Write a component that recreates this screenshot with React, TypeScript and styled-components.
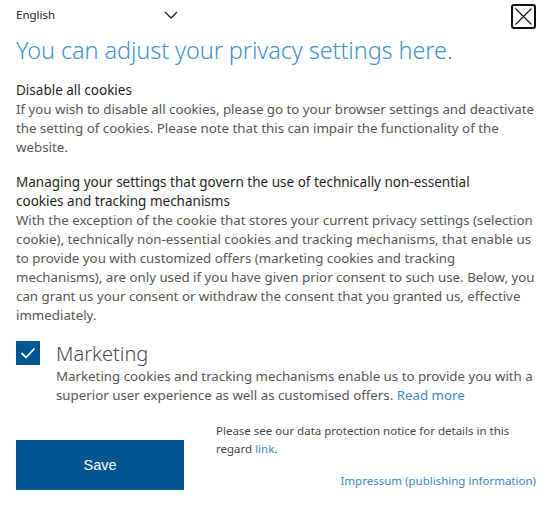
import React from "react";
import styled, { createGlobalStyle } from "styled-components";

const Global = createGlobalStyle`
  html, body { margin: 0; padding: 0; background: #fff; }
  body { font-family: "Noto Sans", "Open Sans", sans-serif; }
  * { box-sizing: border-box; }
`;

const Page = styled.div`
  width: 548px;
  padding: 4px 12px 0 16px;
  display: flex;
  flex-direction: column;
`;

const TopBar = styled.div`
  display: flex;
  align-items: flex-start;
  justify-content: space-between;
  height: 29px;
`;

const LangSelect = styled.div`
  width: 162px;
  display: flex;
  align-items: center;
  justify-content: space-between;
  padding-top: 3px;
  font-size: 11.5px;
  color: #222;
`;

const CloseButton = styled.button`
  width: 25px;
  height: 25px;
  border: 2px solid #111;
  border-radius: 3px;
  background: #fff;
  padding: 0;
  display: flex;
  align-items: center;
  justify-content: center;
  cursor: pointer;
`;

const Title = styled.h1`
  margin: 2px 0 0;
  font-size: 23.5px;
  font-weight: 300;
  color: #3d93cc;
  line-height: 30px;
  letter-spacing: -0.1px;
`;

const Section = styled.section<{ $top: number }>`
  margin-top: ${(p) => p.$top}px;
`;

const Heading = styled.h2`
  margin: 0;
  max-width: 480px;
  font-size: 13.5px;
  font-weight: 400;
  color: #1f1f1f;
  line-height: 19px;
`;

const Para = styled.p`
  margin: 0;
  font-size: 13.3px;
  color: #555;
  line-height: 19px;
`;

const OptionRow = styled.div`
  display: flex;
  gap: 16px;
  margin-top: 16px;
`;

const Check = styled.div`
  width: 24px;
  height: 24px;
  flex: none;
  background: #005691;
  display: flex;
  align-items: center;
  justify-content: center;
`;

const OptionBody = styled.div`
  display: flex;
  flex-direction: column;
`;

const OptionLabel = styled.div`
  font-size: 20px;
  font-weight: 300;
  color: #4a4a4a;
  line-height: 26px;
`;

const Link = styled.a`
  color: #3d86c0;
  text-decoration: none;
`;

const Footer = styled.div`
  display: flex;
  gap: 32px;
  margin-top: 17px;
`;

const SaveButton = styled.button`
  width: 168px;
  height: 50px;
  margin-top: 18px;
  border: none;
  background: #005691;
  color: #fff;
  font-family: "Liberation Sans", Arial, sans-serif;
  font-size: 14.5px;
  flex: none;
`;

const FooterText = styled.div`
  flex: 1;
  display: flex;
  flex-direction: column;
`;

const Note = styled.p`
  margin: 0;
  font-size: 11.5px;
  color: #444;
  line-height: 18px;
`;

const Imprint = styled(Link)`
  align-self: flex-end;
  margin-top: 14px;
  font-size: 11.5px;
  line-height: 18px;
`;

export default function App() {
  return (
    <>
      <Global />
      <Page>
        <TopBar>
          <LangSelect>
            <span>English</span>
            <svg width="14" height="8" viewBox="0 0 14 8" fill="none">
              <path d="M1 1l6 6L13 1" stroke="#222" strokeWidth="1.3" />
            </svg>
          </LangSelect>
          <CloseButton aria-label="Close">
            <svg width="19" height="19" viewBox="0 0 19 19">
              <path d="M1.5 1.5l16 16M17.5 1.5l-16 16" stroke="#111" strokeWidth="1.1" />
            </svg>
          </CloseButton>
        </TopBar>
        <Title>You can adjust your privacy settings here.</Title>
        <Section $top={16}>
          <Heading>Disable all cookies</Heading>
          <Para>
            If you wish to disable all cookies, please go to your browser settings and deactivate
            the setting of cookies. Please note that this can impair the functionality of the
            website.
          </Para>
        </Section>
        <Section $top={16}>
          <Heading>
            Managing your settings that govern the use of technically non-essential cookies and
            tracking mechanisms
          </Heading>
          <Para>
            With the exception of the cookie that stores your current privacy settings (selection
            cookie), technically non-essential cookies and tracking mechanisms, that enable us to
            provide you with customized offers (marketing cookies and tracking mechanisms), are
            only used if you have given prior consent to such use. Below, you can grant us your
            consent or withdraw the consent that you granted us, effective immediately.
          </Para>
        </Section>
        <OptionRow>
          <Check>
            <svg width="16" height="12" viewBox="0 0 16 12" fill="none">
              <path d="M1.5 6l4.5 4.5L14.5 1.5" stroke="#fff" strokeWidth="1.8" />
            </svg>
          </Check>
          <OptionBody>
            <OptionLabel>Marketing</OptionLabel>
            <Para>
              Marketing cookies and tracking mechanisms enable us to provide you with a superior
              user experience as well as customised offers. <Link href="#">Read more</Link>
            </Para>
          </OptionBody>
        </OptionRow>
        <Footer>
          <SaveButton>Save</SaveButton>
          <FooterText>
            <Note>
              Please see our data protection notice for details in this regard{" "}
              <Link href="#">link</Link>.
            </Note>
            <Imprint href="#">Impressum (publishing information)</Imprint>
          </FooterText>
        </Footer>
      </Page>
    </>
  );
}
